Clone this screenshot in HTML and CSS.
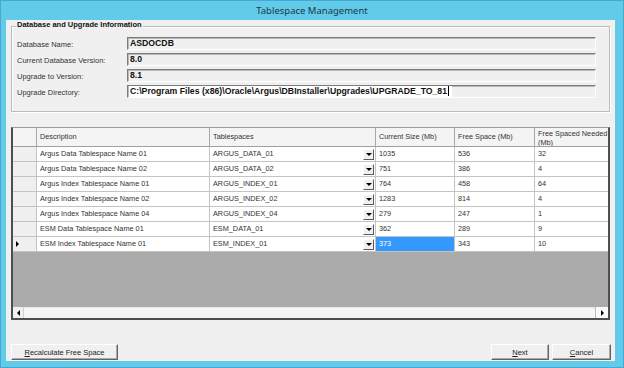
FILE: index.html
```html
<!DOCTYPE html>
<html>
<head>
<meta charset="utf-8">
<link rel="stylesheet" href="styles.css">
</head>
<body>
<div class="window">
  <div class="titlebar">Tablespace Management</div>
  <div class="client">
    <div class="group">
      <span class="legend">Database and Upgrade Information</span>
      <div class="frow"><span class="lbl">Database Name:</span><div class="field">ASDOCDB</div></div>
      <div class="frow"><span class="lbl">Current Database Version:</span><div class="field">8.0</div></div>
      <div class="frow"><span class="lbl">Upgrade to Version:</span><div class="field">8.1</div></div>
      <div class="frow"><span class="lbl">Upgrade Directory:</span><div class="field"><span class="edit">C:\Program Files (x86)\Oracle\Argus\DBInstaller\Upgrades\UPGRADE_TO_81<span class="caret"></span></span></div></div>
    </div>

    <div class="grid">
      <div class="grow ghead">
        <div class="c w0 hd"></div>
        <div class="c w1 hd">Description</div>
        <div class="c w2 hd">Tablespaces</div>
        <div class="c w3 hd">Current Size (Mb)</div>
        <div class="c w4 hd">Free Space (Mb)</div>
        <div class="c w5 hd two">Free Spaced Needed<br>(Mb)</div>
      </div>
      <div class="grow">
        <div class="c w0 rh"></div>
        <div class="c w1">Argus Data Tablespace Name 01</div>
        <div class="c w2 ts"><span>ARGUS_DATA_01</span><span class="dd"></span></div>
        <div class="c w3">1035</div>
        <div class="c w4">536</div>
        <div class="c w5">32</div>
      </div>
      <div class="grow">
        <div class="c w0 rh"></div>
        <div class="c w1">Argus Data Tablespace Name 02</div>
        <div class="c w2 ts"><span>ARGUS_DATA_02</span><span class="dd"></span></div>
        <div class="c w3">751</div>
        <div class="c w4">386</div>
        <div class="c w5">4</div>
      </div>
      <div class="grow">
        <div class="c w0 rh"></div>
        <div class="c w1">Argus Index Tablespace Name 01</div>
        <div class="c w2 ts"><span>ARGUS_INDEX_01</span><span class="dd"></span></div>
        <div class="c w3">764</div>
        <div class="c w4">458</div>
        <div class="c w5">64</div>
      </div>
      <div class="grow">
        <div class="c w0 rh"></div>
        <div class="c w1">Argus Index Tablespace Name 02</div>
        <div class="c w2 ts"><span>ARGUS_INDEX_02</span><span class="dd"></span></div>
        <div class="c w3">1283</div>
        <div class="c w4">814</div>
        <div class="c w5">4</div>
      </div>
      <div class="grow">
        <div class="c w0 rh"></div>
        <div class="c w1">Argus Index Tablespace Name 04</div>
        <div class="c w2 ts"><span>ARGUS_INDEX_04</span><span class="dd"></span></div>
        <div class="c w3">279</div>
        <div class="c w4">247</div>
        <div class="c w5">1</div>
      </div>
      <div class="grow">
        <div class="c w0 rh"></div>
        <div class="c w1">ESM Data Tablespace Name 01</div>
        <div class="c w2 ts"><span>ESM_DATA_01</span><span class="dd"></span></div>
        <div class="c w3">362</div>
        <div class="c w4">289</div>
        <div class="c w5">9</div>
      </div>
      <div class="grow">
        <div class="c w0 rh"><span class="ind"></span></div>
        <div class="c w1">ESM Index Tablespace Name 01</div>
        <div class="c w2 ts"><span>ESM_INDEX_01</span><span class="dd"></span></div>
        <div class="c w3 sel">373</div>
        <div class="c w4">343</div>
        <div class="c w5">10</div>
      </div>
      <div class="gempty"></div>
      <div class="hscroll">
        <div class="sbtn"><span class="tl"></span></div>
        <div class="strack"></div>
        <div class="sbtn sbr"><span class="tr"></span></div>
      </div>
    </div>

    <div class="btnrow">
      <div class="btn b1"><span><u>R</u>ecalculate Free Space</span></div>
      <div class="spacer"></div>
      <div class="btn b2"><span><u>N</u>ext</span></div>
      <div class="btn b3"><span><u>C</u>ancel</span></div>
    </div>
  </div>
</div>
</body>
</html>
```

FILE: styles.css
```css
* { box-sizing: border-box; }
body {
  margin: 0;
  width: 624px;
  height: 368px;
  overflow: hidden;
  font-family: "Liberation Sans", Arial, sans-serif;
}
.window {
  width: 624px;
  height: 368px;
  background: #62cbea;
  border: 1px solid #46a9d4;
  padding: 0 8px 6px 5px;
  display: flex;
  flex-direction: column;
}
.titlebar {
  height: 19px;
  line-height: 20px;
  text-align: center;
  font-family: "Noto Sans", sans-serif;
  font-size: 9.5px;
  color: #1b3848;
  padding-left: 3px;
}
.client {
  flex: 1;
  background: #f0f0f0;
  padding: 6px 5px 0 5px;
  display: flex;
  flex-direction: column;
}
.group {
  position: relative;
  height: 86px;
  border: 1px solid #bcbcbc;
  box-shadow: inset 1px 1px 0 #fff, 1px 1px 0 #fff;
  padding: 10px 0 0 5px;
}
.legend {
  position: absolute;
  top: -7px;
  left: 4px;
  padding: 0 1px;
  background: #f0f0f0;
  font-weight: bold;
  font-size: 7.5px;
  line-height: 10px;
  color: #111;
}
.frow {
  display: flex;
  height: 16px;
  align-items: flex-start;
}
.lbl {
  width: 110px;
  font-size: 7.5px;
  line-height: 13px;
  padding-top: 1px;
  color: #333;
}
.field {
  width: 469px;
  height: 13px;
  border-top: 1px solid #7c7c7c;
  border-left: 1px solid #7c7c7c;
  border-bottom: 1px solid #fff;
  border-right: 1px solid #fff;
  box-shadow: inset 1px 1px 0 #b8b8b8;
  font-weight: bold;
  font-size: 8.7px;
  line-height: 11px;
  padding-left: 2px;
  color: #111;
  white-space: nowrap;
}
.edit {
  display: inline-block;
  background: #fff;
  padding-right: 3px;
  margin-left: -1px;
  padding-left: 1px;
}
.caret {
  display: inline-block;
  width: 1px;
  height: 10px;
  background: #000;
  vertical-align: -2px;
  margin-left: 1px;
}

.grid {
  margin-top: 15px;
  height: 193px;
  border-style: solid;
  border-width: 1px 2px 2px 2px;
  border-color: #9a9a9a #4e4e4e #4e4e4e #4e4e4e;
  display: flex;
  flex-direction: column;
  background: #ababab;
}
.grow {
  display: flex;
  height: 15px;
  flex: none;
}
.ghead { height: 19px; }
.c {
  background: #fff;
  border-right: 1px solid #c4c4c4;
  border-bottom: 1px solid #c4c4c4;
  font-size: 7.3px;
  line-height: 14px;
  padding-left: 3px;
  white-space: nowrap;
  overflow: hidden;
  color: #333;
}
.hd {
  background: #f4f4f4;
  border-right-color: #a8a8a8;
  border-bottom-color: #a0a0a0;
  line-height: 18px;
}
.hd.two {
  line-height: 9px;
  padding-top: 1px;
}
.rh { background: #f0f0f0; display: flex; align-items: center; padding-left: 2px; }
.w0 { width: 24px; }
.w1 { width: 173px; }
.w2 { width: 166px; }
.w3 { width: 79px; }
.w4 { width: 80px; }
.w5 { width: 73px; border-right: none; }
.ts {
  display: flex;
  align-items: center;
  justify-content: space-between;
  padding-right: 1px;
}
.dd {
  width: 11px;
  height: 11px;
  background: #f0f0f0;
  border: 1px solid;
  border-color: #fff #5a5a5a #5a5a5a #fff;
  display: flex;
  align-items: center;
  justify-content: center;
}
.dd::after {
  content: "";
  width: 0;
  height: 0;
  border-left: 3px solid transparent;
  border-right: 3px solid transparent;
  border-top: 3px solid #000;
}
.sel { background: #3399ff; color: #fff; }
.ind {
  width: 0;
  height: 0;
  border-top: 3px solid transparent;
  border-bottom: 3px solid transparent;
  border-left: 3px solid #000;
  margin-left: 1px;
}
.gempty { flex: 1; background: #ababab; }
.hscroll {
  height: 11px;
  display: flex;
  background: #f0f0f0;
  flex: none;
}
.sbtn {
  width: 11px;
  height: 11px;
  background: #f0f0f0;
  border-right: 1px solid #d0d0d0;
  display: flex;
  align-items: center;
  justify-content: center;
}
.sbr {
  width: 13px;
  border-right: none;
  border-left: 1px solid #bdbdbd;
  background: #fafafa;
}
.strack {
  flex: 1;
  background: #f6f6f6;
  border-top: 1px solid #e6e6e6;
}
.tl, .tr {
  width: 0;
  height: 0;
  border-top: 3px solid transparent;
  border-bottom: 3px solid transparent;
}
.tl { border-right: 3px solid #000; }
.tr { border-left: 3px solid #000; }

.btnrow {
  display: flex;
  margin-top: 24px;
  margin-right: -1px;
}
.btn {
  height: 16px;
  background: #f0f0f0;
  border: 1px solid;
  border-color: #fff #646464 #646464 #fff;
  box-shadow: inset -1px -1px 0 #a8a8a8;
  display: flex;
  align-items: center;
  justify-content: center;
  font-size: 7.5px;
  color: #222;
}
.b1 { width: 107px; }
.b2 { width: 58px; }
.b3 { width: 59px; margin-left: 3px; }
.spacer { flex: 1; }
```
